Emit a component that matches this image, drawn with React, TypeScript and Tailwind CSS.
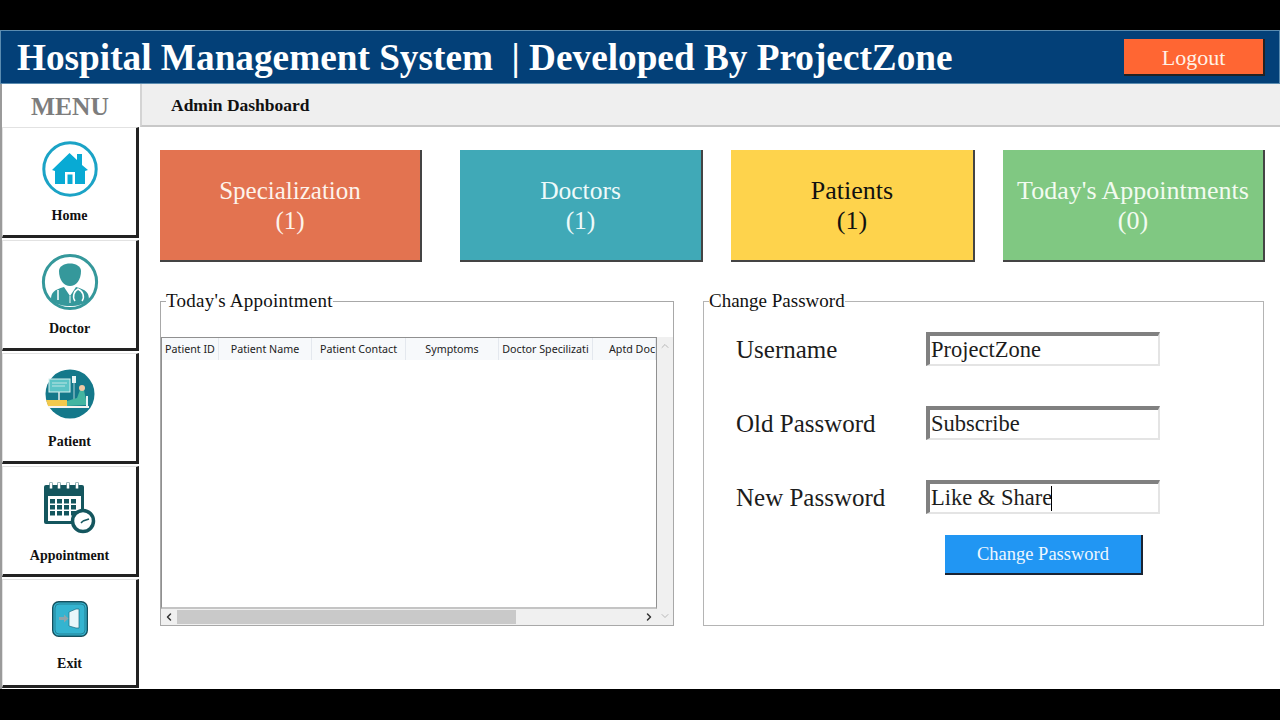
import type { ReactNode } from "react";
import { ChevronDown, ChevronLeft, ChevronRight, ChevronUp } from "lucide-react";

const serif = "font-['Liberation_Serif',serif]";

function HomeIcon() {
  return (
    <svg width="58" height="58" viewBox="0 0 58 58">
      <circle cx="29" cy="29" r="26.2" fill="#fff" stroke="#1ba3c6" strokeWidth="3" />
      <path d="M11 30 L28.5 13 L36 20 V14 H41 V25 L47 30 L44 31 V44 H14 V31 Z" fill="#08aad4" />
      <path d="M24 44 V32 H34 V44 H31.5 V34.5 H26.5 V44 Z" fill="#fff" />
    </svg>
  );
}

function DoctorIcon() {
  return (
    <svg width="58" height="58" viewBox="0 0 58 58">
      <circle cx="29" cy="29" r="26.6" fill="#fff" stroke="#35989b" strokeWidth="3" />
      <path d="M18 18 C18 8 40 8 40 18 C40 27 35 33 29 33 C23 33 18 27 18 18 Z" fill="#35989b" />
      <path d="M10 47 C10 39 13 37 23 34 L29 43 L35 34 C45 37 48 39 48 47 C40 55 18 55 10 47 Z" fill="#35989b" />
      <path d="M17 37 V47 M34 48 C31 44 33 38 37 36 C42 38 44 44 41 48" fill="none" stroke="#fff" strokeWidth="1.5" />
      <path d="M29 43 V50" stroke="#fff" strokeWidth="1" />
    </svg>
  );
}

function PatientIcon() {
  return (
    <svg width="50" height="50" viewBox="0 0 50 50">
      <circle cx="25" cy="25" r="24.5" fill="#14788a" />
      <rect x="4" y="10" width="21" height="13" fill="#5cc4c6" stroke="#d8f0ee" strokeWidth="1" />
      <path d="M7 14 H22 M7 17 H20" stroke="#d8f0ee" strokeWidth="0.8" />
      <path d="M14 23 V32" stroke="#d8e8e8" strokeWidth="1.6" />
      <rect x="27" y="7" width="4" height="7" fill="#e8f4f4" />
      <path d="M29 14 V32" stroke="#d8e8e8" strokeWidth="0.8" />
      <path d="M1 31 H22 V37 H3 Z" fill="#f2c94c" />
      <path d="M22 37 V32 L32 29 L35 21 H39 L41 31 V36 Z" fill="#43b5a0" />
      <circle cx="37" cy="19" r="3" fill="#f1c9a5" />
      <path d="M41 27 H43 V37 H41 Z" fill="#e8f4f4" />
      <path d="M3 37 H44 V39 H4 Z" fill="#f4f4f0" />
    </svg>
  );
}

function CalendarIcon() {
  return (
    <svg width="52" height="52" viewBox="0 0 52 52">
      <path d="M2 3 H38 Q40 3 40 5 V42 H2 Q0 42 0 40 V5 Q0 3 2 3 Z" fill="#14565e" />
      <rect x="4" y="14" width="33" height="25" fill="#fff" />
      {[7, 15, 24, 33].map((x) => (
        <rect key={x} x={x - 1.5} y="0" width="3" height="7" rx="1.5" fill="#fff" stroke="#14565e" strokeWidth="0.5" />
      ))}
      {[17, 23, 29].map((y) =>
        [6, 13, 20, 27].map((x) => <rect key={`${x}-${y}`} x={x} y={y} width="5" height="4.5" fill="#14565e" />),
      )}
      <circle cx="39" cy="39" r="10.5" fill="#fff" stroke="#14565e" strokeWidth="3.5" />
      <path d="M39 39 L45 37 M39 39 L37 41" stroke="#14565e" strokeWidth="1.6" />
    </svg>
  );
}

function ExitIcon() {
  return (
    <svg width="36" height="36" viewBox="0 0 36 36">
      <rect x="0.7" y="0.7" width="34.6" height="34.6" rx="6" fill="#34b4d0" stroke="#14505e" strokeWidth="1.4" />
      <rect x="3" y="3" width="30" height="30" rx="4" fill="none" stroke="#14505e" strokeWidth="0.5" />
      <path d="M17 11 L24 8 H27 V27 H24 L17 25 Z" fill="#e8f7fa" stroke="#1b6c80" strokeWidth="0.7" />
      <path d="M7 16 H12 V13.5 L16.5 17.5 L12 21.5 V19 H7 Z" fill="#8fa4aa" />
    </svg>
  );
}

type NavItem = { label: string; icon: ReactNode; height: string; iconBox: string };

const navItems: NavItem[] = [
  { label: "Home", icon: <HomeIcon />, height: "h-[111px]", iconBox: "pt-[12px] h-[79px]" },
  { label: "Doctor", icon: <DoctorIcon />, height: "h-[111px]", iconBox: "pt-[12px] h-[79px]" },
  { label: "Patient", icon: <PatientIcon />, height: "h-[111px]", iconBox: "pt-[15px] h-[79px]" },
  { label: "Appointment", icon: <CalendarIcon />, height: "h-[111px]", iconBox: "pt-[15px] h-[80px]" },
  { label: "Exit", icon: <ExitIcon />, height: "h-[109px]", iconBox: "pt-[21px] h-[75px]" },
];

const statCards = [
  { title: "Specialization", count: "(1)", width: "w-[262px]", margin: "ml-0", bg: "bg-[#e37350]", text: "text-[#fdf3ec]", size: "text-[25px]" },
  { title: "Doctors", count: "(1)", width: "w-[243px]", margin: "ml-[38px]", bg: "bg-[#40a9b7]", text: "text-[#eefafa]", size: "text-[25.5px]" },
  { title: "Patients", count: "(1)", width: "w-[244px]", margin: "ml-[28px]", bg: "bg-[#fed34c]", text: "text-[#111111]", size: "text-[26px]" },
  { title: "Today's Appointments", count: "(0)", width: "w-[262px]", margin: "ml-[28px]", bg: "bg-[#80c882]", text: "text-[#f2fbf0]", size: "text-[26px]" },
];

const columns = [
  { name: "Patient ID", width: "w-[57px]", align: "justify-center" },
  { name: "Patient Name", width: "w-[93px]", align: "justify-center" },
  { name: "Patient Contact", width: "w-[94px]", align: "justify-center" },
  { name: "Symptoms", width: "w-[93px]", align: "justify-center" },
  { name: "Doctor Specilizati", width: "w-[94px]", align: "justify-center" },
  { name: "Aptd Doc", width: "w-[63px]", align: "justify-start pl-[16px]" },
];

function PasswordRow({ label, value, caret }: { label: string; value: string; caret?: boolean }) {
  return (
    <div className="flex h-[34px] items-center">
      <div className="w-[190px] pt-[2px] text-[25px] text-[#1c1c1c]">{label}</div>
      <div className="flex h-[34px] w-[234px] items-center border-t-4 border-l-4 border-r-2 border-b-2 border-t-[#808080] border-l-[#808080] border-r-[#e4e4e4] border-b-[#e4e4e4] bg-white pl-px text-[22.5px] text-[#1c1c1c]">
        <span>{value}</span>
        {caret ? <span className="-ml-px h-[25px] w-px bg-black" /> : null}
      </div>
    </div>
  );
}

export default function App() {
  return (
    <div className={`flex h-[720px] w-[1280px] flex-col overflow-hidden bg-black ${serif}`}>
      <div className="h-[30px] shrink-0" />
      <div className="flex h-[659px] flex-col bg-white">
        {/* top bar */}
        <header className="flex h-[54px] shrink-0 items-center justify-between border border-[#5b8cb0] bg-[#034078] pl-[16px] pr-[14px]">
          <h1 className="whitespace-pre pt-[2px] text-[37.25px] font-bold text-white">
            Hospital Management System  | Developed By ProjectZone
          </h1>
          <button className="h-[37px] w-[141px] border-r-2 border-b-2 border-r-[#222] border-b-[#222] bg-[#ff6633] pt-[2px] text-[22px] text-[#fff1e6]">
            Logout
          </button>
        </header>

        <div className="flex min-h-0 flex-1">
          {/* sidebar */}
          <aside className="flex w-[140px] shrink-0 flex-col border-l-2 border-l-[#9a9a9a]">
            <div className="flex h-[43px] items-center justify-center pr-[2px] pt-[3px] text-[25.5px] font-bold text-[#7d7d7d]">
              MENU
            </div>
            <nav className="flex flex-col gap-[2px]">
              {navItems.map((item) => (
                <button
                  key={item.label}
                  className={`${item.height} flex w-[137px] flex-col items-center border-t border-l border-r-[3px] border-b-[3px] border-t-[#e2e2e2] border-l-[#e2e2e2] border-r-[#222] border-b-[#222] bg-white`}
                >
                  <span className={`${item.iconBox} block`}>{item.icon}</span>
                  <span className="text-[14px] font-bold leading-[18px] text-[#111]">{item.label}</span>
                </button>
              ))}
            </nav>
          </aside>

          <main className="flex min-w-0 flex-1 flex-col">
            <div className="flex h-[43px] shrink-0 items-center border-b-2 border-l-2 border-b-[#c8c8c8] border-l-[#d4d4d4] bg-[#efefef] pl-[29px] pt-[2px] text-[17.5px] font-bold text-[#111]">
              Admin Dashboard
            </div>

            <div className="pl-[20px] pt-[23px]">
              {/* stat cards */}
              <div className="flex">
                {statCards.map((card) => (
                  <div
                    key={card.title}
                    className={`${card.width} ${card.margin} ${card.bg} ${card.text} ${card.size} flex h-[112px] flex-col items-center justify-center border-r-2 border-b-2 border-r-[#444] border-b-[#444] pt-[2px] leading-[30px]`}
                  >
                    <div>{card.title}</div>
                    <div>{card.count}</div>
                  </div>
                ))}
              </div>

              <div className="mt-[30px] flex">
                {/* appointment list */}
                <fieldset className="h-[334px] w-[514px] border border-[#a8a8a8]">
                  <legend className="ml-[5px] text-[19px] leading-[18px] tracking-[0.25px] text-[#111]">
                    Today's Appointment
                  </legend>
                  <div className="relative mt-[27px] h-[288px]">
                    <div className="flex h-[272px] w-[496px] flex-col border-t border-l border-r border-b-2 border-[#909090] border-b-[#c4c4c4] border-t-[#909090]">
                      <div className="flex h-[22px] shrink-0 overflow-hidden bg-[#f7f9fb] font-['Noto_Sans',sans-serif] text-[10.7px] text-[#222]">
                        {columns.map((col) => (
                          <div
                            key={col.name}
                            className={`${col.width} ${col.align} flex shrink-0 items-center whitespace-nowrap border-r border-r-[#e4e8ee]`}
                          >
                            {col.name}
                          </div>
                        ))}
                      </div>
                      <div className="flex-1 bg-white" />
                    </div>
                    {/* vertical scrollbar */}
                    <div className="absolute right-0 top-0 flex h-[288px] w-[16px] flex-col items-center justify-between bg-[#f0f0f0] py-[3px] text-[#b8b8b8]">
                      <ChevronUp size={12} strokeWidth={2} />
                      <ChevronDown size={12} strokeWidth={2} />
                    </div>
                    {/* horizontal scrollbar */}
                    <div className="flex h-[16px] w-[496px] items-center bg-[#f0f0f0] text-[#333]">
                      <div className="flex w-[16px] justify-center">
                        <ChevronLeft size={12} strokeWidth={3} />
                      </div>
                      <div className="h-[14px] w-[339px] bg-[#c9c9c9]" />
                      <div className="flex-1" />
                      <div className="flex w-[16px] justify-center">
                        <ChevronRight size={12} strokeWidth={3} />
                      </div>
                    </div>
                  </div>
                </fieldset>

                {/* change password */}
                <fieldset className="ml-[29px] h-[334px] w-[561px] border border-[#b4b4b4]">
                  <legend className="ml-[5px] text-[19px] leading-[18px] text-[#111]">Change Password</legend>
                  <div className="flex flex-col gap-[40px] pl-[32px] pt-[22px]">
                    <PasswordRow label="Username" value="ProjectZone" />
                    <PasswordRow label="Old Password" value="Subscribe" />
                    <PasswordRow label="New Password" value="Like & Share" caret />
                  </div>
                  <button className="ml-[241px] mt-[21px] h-[40px] w-[198px] border-r-2 border-b-2 border-r-[#1a2433] border-b-[#1a2433] bg-[#2196f3] pt-px text-[18.5px] text-[#eef7ff]">
                    Change Password
                  </button>
                </fieldset>
              </div>
            </div>
          </main>
        </div>
      </div>
    </div>
  );
}
